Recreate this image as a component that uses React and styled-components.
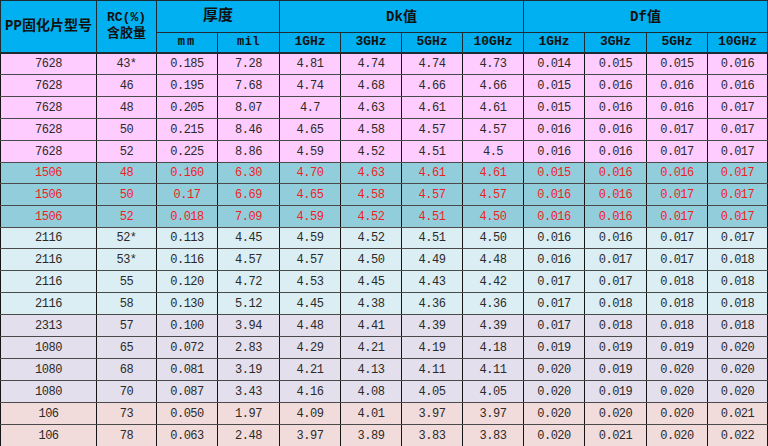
import React from "react";
import styled, { createGlobalStyle } from "styled-components";

const Global = createGlobalStyle`
  html, body { margin: 0; padding: 0; background: #ffffff; }
  body { width: 768px; height: 446px; overflow: hidden; }
`;

const Table = styled.table`
  width: 767px;
  table-layout: fixed;
  border-collapse: collapse;
  font-family: "Liberation Mono", "Noto Sans CJK SC", monospace;
  color: #2a2a2a;
`;

const HeadCell = styled.th`
  background: #00b0f0;
  color: #111;
  font-weight: bold;
  font-size: ${(p) => p.$size || 13}px;
  letter-spacing: ${(p) => p.$ls || 0}px;
  border: 1px solid #1d2b33;
  border-bottom-width: ${(p) => (p.$bottom ? 2 : 1)}px;
  padding: 0;
  text-align: center;
  vertical-align: middle;
  line-height: ${(p) => p.$lh || 16}px;
  height: ${(p) => p.$h}px;
  box-sizing: border-box;
  white-space: nowrap;
`;

const Row = styled.tr`
  background: ${(p) => p.$bg};
  color: ${(p) => (p.$red ? "#f01e1e" : "#2a2a2a")};
`;

const Cell = styled.td`
  border-left: 1px solid #151515;
  border-right: 1px solid #151515;
  border-top: 1px solid #4a4a4a;
  border-bottom: 1px solid #4a4a4a;
  padding: 0;
  text-align: center;
  vertical-align: middle;
  font-size: 12px;
  letter-spacing: -0.5px;
  height: ${(p) => p.$h}px;
  box-sizing: border-box;
  white-space: nowrap;
`;

const widths = [96, 60, 61, 62, 61, 61, 61, 61, 61, 62, 61, 60];

const groups = {
  pink: "#ffccff",
  teal: "#92cddc",
  ice: "#daeef3",
  lav: "#e4dfec",
  peach: "#f2dcdb",
};

const rows = [
  ["pink", ["7628", "43*", "0.185", "7.28", "4.81", "4.74", "4.74", "4.73", "0.014", "0.015", "0.015", "0.016"]],
  ["pink", ["7628", "46", "0.195", "7.68", "4.74", "4.68", "4.66", "4.66", "0.015", "0.016", "0.016", "0.016"]],
  ["pink", ["7628", "48", "0.205", "8.07", "4.7", "4.63", "4.61", "4.61", "0.015", "0.016", "0.016", "0.017"]],
  ["pink", ["7628", "50", "0.215", "8.46", "4.65", "4.58", "4.57", "4.57", "0.016", "0.016", "0.017", "0.017"]],
  ["pink", ["7628", "52", "0.225", "8.86", "4.59", "4.52", "4.51", "4.5", "0.016", "0.016", "0.017", "0.017"]],
  ["teal", ["1506", "48", "0.160", "6.30", "4.70", "4.63", "4.61", "4.61", "0.015", "0.016", "0.016", "0.017"], true, 21],
  ["teal", ["1506", "50", "0.17", "6.69", "4.65", "4.58", "4.57", "4.57", "0.016", "0.016", "0.017", "0.017"], true],
  ["teal", ["1506", "52", "0.018", "7.09", "4.59", "4.52", "4.51", "4.50", "0.016", "0.016", "0.017", "0.017"], true],
  ["ice", ["2116", "52*", "0.113", "4.45", "4.59", "4.52", "4.51", "4.50", "0.016", "0.016", "0.017", "0.017"], false, 21],
  ["ice", ["2116", "53*", "0.116", "4.57", "4.57", "4.50", "4.49", "4.48", "0.016", "0.017", "0.017", "0.018"]],
  ["ice", ["2116", "55", "0.120", "4.72", "4.53", "4.45", "4.43", "4.42", "0.017", "0.017", "0.018", "0.018"]],
  ["ice", ["2116", "58", "0.130", "5.12", "4.45", "4.38", "4.36", "4.36", "0.017", "0.018", "0.018", "0.018"]],
  ["lav", ["2313", "57", "0.100", "3.94", "4.48", "4.41", "4.39", "4.39", "0.017", "0.018", "0.018", "0.018"]],
  ["lav", ["1080", "65", "0.072", "2.83", "4.29", "4.21", "4.19", "4.18", "0.019", "0.019", "0.019", "0.020"]],
  ["lav", ["1080", "68", "0.081", "3.19", "4.21", "4.13", "4.11", "4.11", "0.020", "0.019", "0.020", "0.020"]],
  ["lav", ["1080", "70", "0.087", "3.43", "4.16", "4.08", "4.05", "4.05", "0.020", "0.019", "0.020", "0.020"]],
  ["peach", ["106", "73", "0.050", "1.97", "4.09", "4.01", "3.97", "3.97", "0.020", "0.020", "0.020", "0.021"]],
  ["peach", ["106", "78", "0.063", "2.48", "3.97", "3.89", "3.83", "3.83", "0.020", "0.021", "0.020", "0.022"]],
];

const freqs = ["1GHz", "3GHz", "5GHz", "10GHz"];

export default function App() {
  return (
    <>
      <Global />
      <Table>
        <colgroup>
          {widths.map((w, i) => (
            <col key={i} style={{ width: w }} />
          ))}
        </colgroup>
        <thead>
          <tr>
            <HeadCell rowSpan={2} $size={14} $bottom>
              PP固化片型号
            </HeadCell>
            <HeadCell rowSpan={2} $size={13} $lh={16} $bottom>
              RC(%)
              <br />
              含胶量
            </HeadCell>
            <HeadCell colSpan={2} $size={15} $h={32}>厚度</HeadCell>
            <HeadCell colSpan={4} $size={14} $h={32}>Dk值</HeadCell>
            <HeadCell colSpan={4} $size={14} $h={32}>Df值</HeadCell>
          </tr>
          <tr>
            <HeadCell $size={12} $ls={2} $h={20} $bottom>mm</HeadCell>
            <HeadCell $size={12} $ls={0.5} $h={20} $bottom>mil</HeadCell>
            {freqs.map((f) => (
              <HeadCell key={"dk" + f} $size={13} $h={20} $bottom>{f}</HeadCell>
            ))}
            {freqs.map((f) => (
              <HeadCell key={"df" + f} $size={13} $h={20} $bottom>{f}</HeadCell>
            ))}
          </tr>
        </thead>
        <tbody>
          {rows.map(([g, vals, red, h], ri) => (
            <Row key={ri} $bg={groups[g]} $red={red}>
              {vals.map((v, ci) => (
                <Cell key={ci} $h={h || 22}>{v}</Cell>
              ))}
            </Row>
          ))}
        </tbody>
      </Table>
    </>
  );
}
